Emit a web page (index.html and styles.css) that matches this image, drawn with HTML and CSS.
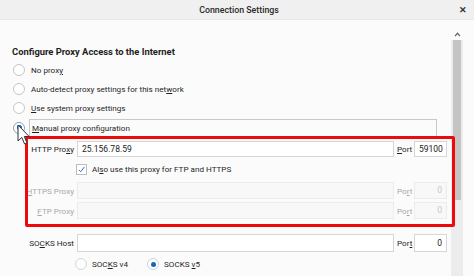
FILE: index.html
```html
<!DOCTYPE html>
<html>
<head>
<meta charset="utf-8">
<link rel="stylesheet" href="styles.css">
</head>
<body>
<div class="window">
  <div class="titlebar">
    <span class="title">Connection Settings</span>
    <span class="close">✕</span>
  </div>
  <div class="body">
    <div class="content">
      <h1 class="heading">Configure Proxy Access to the Internet</h1>
      <div class="radio-row"><span class="radio"></span><span class="label">No prox<u>y</u></span></div>
      <div class="radio-row"><span class="radio"></span><span class="label">Auto-detect proxy settings for this net<u>w</u>ork</span></div>
      <div class="radio-row"><span class="radio"></span><span class="label"><u>U</u>se system proxy settings</span></div>
      <div class="radio-row manual"><span class="radio checked"></span><span class="label focus"><u>M</u>anual proxy configuration</span></div>

      <div class="proxy-grid">
        <span class="flabel">HTTP Pro<u>x</u>y</span>
        <span class="input">25.156.78.59</span>
        <span class="plabel"><u>P</u>ort</span>
        <span class="input port">59100</span>

        <span class="check-row">
          <span class="checkbox"><svg viewBox="0 0 12 12" width="11" height="11"><path d="M2.5 6.5 L5 9 L9.8 2.5" fill="none" stroke="#2a6fc9" stroke-width="1.3"/></svg></span>
          <span class="label">Al<u>s</u>o use this proxy for FTP and HTTPS</span>
        </span>

        <span class="flabel disabled"><u>H</u>TTPS Proxy</span>
        <span class="input disabled"></span>
        <span class="plabel disabled">Po<u>r</u>t</span>
        <span class="input port disabled">0</span>

        <span class="flabel disabled"><u>F</u>TP Proxy</span>
        <span class="input disabled"></span>
        <span class="plabel disabled">Po<u>r</u>t</span>
        <span class="input port disabled">0</span>

        <span class="flabel socks">SO<u>C</u>KS Host</span>
        <span class="input socks"></span>
        <span class="plabel socks">Por<u>t</u></span>
        <span class="input port socks">0</span>
      </div>

      <div class="socks-versions">
        <span class="radio"></span><span class="label">SOC<u>K</u>S v4</span>
        <span class="radio checked v5"></span><span class="label">SOCKS <u>v</u>5</span>
      </div>
    </div>
    <div class="scrollbar">
      <div class="arrow">
        <svg viewBox="0 0 8 6" width="7" height="5"><path d="M1 5 L4 1.5 L7 5" fill="none" stroke="#606060" stroke-width="1.4"/></svg>
      </div>
      <div class="track"><div class="thumb"></div></div>
    </div>
  </div>
  <div class="annotation"></div>
  <svg class="cursor" viewBox="0 0 13 21" width="13" height="21">
    <path d="M1 1 L1 17 L4.8 13.4 L7.6 20 L10 19 L7.3 12.5 L12.2 12.5 Z" fill="#fff" stroke="#2b3440" stroke-width="1" stroke-linejoin="round"/>
  </svg>
</div>
</body>
</html>
```

FILE: styles.css
```css
* { box-sizing: border-box; }
html, body { margin: 0; padding: 0; }
body {
  width: 474px;
  height: 276px;
  overflow: hidden;
  background: #fbfbfb;
  font-family: Roboto, "Open Sans", sans-serif;
  font-size: 8.1px;
  color: #1f1f1f;
}
u { text-decoration: underline; text-underline-offset: 1px; text-decoration-thickness: 0.7px; }

.window {
  position: relative;
  width: 474px;
  height: 276px;
  display: flex;
  flex-direction: column;
}

.titlebar {
  height: 20px;
  flex: none;
  background: #f0f0f0;
  border-bottom: 1px solid #e8e8e8;
  display: flex;
  align-items: center;
  justify-content: center;
  position: relative;
}
.title {
  font-size: 8.8px;
  font-weight: 500;
  color: #2a2a2a;
  margin-left: 4px;
}
.close {
  position: absolute;
  right: 7px;
  top: 5px;
  font-size: 8.5px;
  font-weight: 700;
  color: #333;
}

.body {
  flex: 1;
  display: flex;
  background: #fbfbfb;
}
.content {
  flex: 1;
  padding: 24px 4px 0 12px;
  display: flex;
  flex-direction: column;
}
.heading {
  margin: 0;
  font-size: 9.4px;
  font-weight: 700;
  line-height: 16px;
  height: 16px;
  color: #1e1e1e;
}

.radio-row {
  height: 19px;
  display: flex;
  align-items: center;
  gap: 6px;
  margin-left: 1px;
}
.radio {
  width: 12px;
  height: 12px;
  flex: none;
  border-radius: 50%;
  border: 1px solid #c6c6c6;
  background: #fff;
  position: relative;
}
.radio.checked {
  border-color: #8aa3bf;
}
.radio.checked::after {
  content: "";
  position: absolute;
  left: 2.5px;
  top: 2.5px;
  width: 5px;
  height: 5px;
  border-radius: 50%;
  background: #1565b8;
}
.label { white-space: nowrap; }

.manual { margin-top: 1px; }
.focus {
  flex: 1;
  margin-left: -2px;
  margin-right: 10px;
  height: 18px;
  line-height: 16px;
  padding-left: 2px;
  border: 1px solid #c9c9c9;
}

.proxy-grid {
  margin-top: 4px;
  display: grid;
  grid-template-columns: 62px 1fr 14px 33px;
  column-gap: 3px;
  align-items: center;
}
.flabel {
  text-align: right;
  white-space: nowrap;
}
.plabel {
  white-space: nowrap;
}
.input {
  height: 16px;
  background: #fff;
  border: 1px solid #d6d6d6;
  line-height: 14px;
  padding: 0 4px;
  white-space: nowrap;
  color: #1a1a1a;
  font-size: 8.5px;
}
.input.port { text-align: right; padding-right: 4px; }
.input.disabled {
  height: 17px;
  background: #f8f8f8;
  border-color: #ececec;
  color: #c8c8c8;
  margin-top: 3px;
}
.flabel.disabled, .plabel.disabled { color: #a8a8a8; margin-top: 3px; }

.check-row {
  grid-column: 2 / 5;
  height: 20px;
  margin-top: 2px;
  display: flex;
  align-items: center;
  gap: 5px;
}
.checkbox {
  width: 11px;
  height: 11px;
  margin-left: -1px;
  border: 1px solid #bdbdbd;
  background: #fff;
  display: flex;
  align-items: center;
  justify-content: center;
}
.checkbox svg { display: block; }

.input.socks { height: 18px; margin-top: 15px; line-height: 16px; }
.flabel.socks, .plabel.socks { margin-top: 15px; }

.socks-versions {
  height: 22px;
  margin-top: 1px;
  margin-left: 63px;
  display: flex;
  align-items: center;
  gap: 5px;
}
.socks-versions .label { margin-right: 14px; }
.socks-versions .radio { border-color: #d6d6d6; }
.socks-versions .radio.v5 { border-color: #c8d3e0; }

.scrollbar {
  width: 12px;
  flex: none;
  margin-right: 11px;
  display: flex;
  flex-direction: column;
}
.arrow {
  height: 20px;
  display: flex;
  align-items: flex-end;
  justify-content: center;
  padding-bottom: 3px;
}
.arrow svg { display: block; }
.track {
  flex: 1;
  background: #ececec;
  padding: 0 2px;
}
.thumb {
  height: 160px;
  background: #c4c4c4;
}

.annotation {
  position: absolute;
  left: 25px;
  top: 136px;
  width: 430px;
  height: 91px;
  border: 3px solid #ee0a0a;
  border-radius: 2px;
}
.cursor {
  position: absolute;
  left: 17px;
  top: 124px;
}
```
